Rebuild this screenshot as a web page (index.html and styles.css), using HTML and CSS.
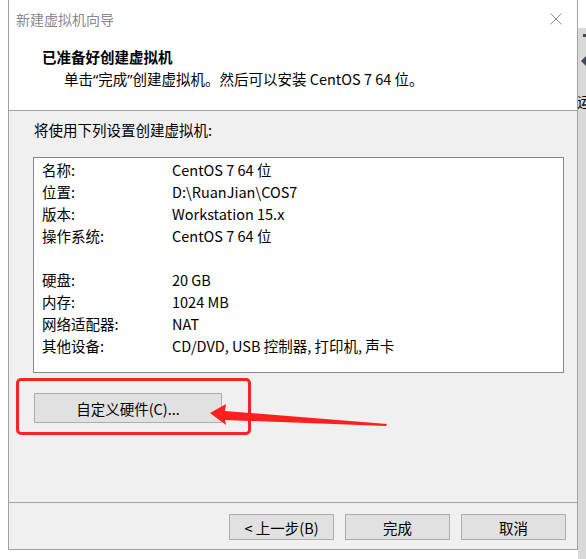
FILE: index.html
```html
<!DOCTYPE html>
<html lang="zh-CN">
<head>
    <meta charset="UTF-8">
    <title>新建虚拟机向导</title>
    <link rel="stylesheet" href="styles.css">
</head>
<body>
<div class="screen">
    <div class="wizard">
        <div class="head">
            <div class="titlebar">
                <span class="title">新建虚拟机向导</span>
                <svg class="close" width="12" height="12" viewBox="0 0 12 12">
                    <path d="M0.5 0.5 L11.5 11.5 M11.5 0.5 L0.5 11.5" stroke="#8c8c8c" stroke-width="1" fill="none"/>
                </svg>
            </div>
            <div class="intro">
                <h1>已准备好创建虚拟机</h1>
                <p>单击<span class="q">“</span>完成<span class="q">”</span>创建虚拟机。然后可以安装 CentOS 7 64 位。</p>
            </div>
        </div>

        <div class="content">
            <p class="lead">将使用下列设置创建虚拟机:</p>

            <div class="summary">
                <div class="row"><span>名称:</span><span>CentOS 7 64 位</span></div>
                <div class="row"><span>位置:</span><span>D:\RuanJian\COS7</span></div>
                <div class="row"><span>版本:</span><span>Workstation 15.x</span></div>
                <div class="row"><span>操作系统:</span><span>CentOS 7 64 位</span></div>
                <div class="row"></div>
                <div class="row"><span>硬盘:</span><span>20 GB</span></div>
                <div class="row"><span>内存:</span><span>1024 MB</span></div>
                <div class="row"><span>网络适配器:</span><span>NAT</span></div>
                <div class="row"><span>其他设备:</span><span>CD/DVD, USB 控制器, 打印机, 声卡</span></div>
            </div>

            <div class="custom">
                <button class="btn hw">自定义硬件(C)...</button>
                <span class="mark"></span>
                <svg class="arrow" width="180" height="26" viewBox="0 0 180 26">
                    <!-- tapered arrow pointing back at the button -->
                    <path d="M0 9 L16 0 L15 7 L177 20 L176 22 L15 16 L16 21 Z" fill="#ff1f1f"/>
                </svg>
            </div>
        </div>

        <div class="foot">
            <button class="btn">&lt; 上一步(B)</button>
            <button class="btn">完成</button>
            <button class="btn">取消</button>
        </div>
    </div>

    <div class="side">
        <div class="side-top"></div>
        <div class="side-panel">
            <span class="dot"></span>
            <span class="tri"></span>
            <span class="cut">运</span>
        </div>
    </div>
</div>
</body>
</html>
```
FILE: styles.css
```css
body {
    margin: 0;
    padding: 0;
    background: #fff;
    font-family: "Noto Sans CJK SC", "Noto Sans", sans-serif;
    font-size: 14.5px;
    color: #000;
}

.screen {
    display: flex;
    height: 559px;
}

.wizard {
    margin-left: 8px;
    width: 568px;
    height: 549px;
    border: 1px solid #a0a0a0;
    border-top: none;
    background: #f0f0f0;
    display: flex;
    flex-direction: column;
}

/* header */
.head {
    background: #fff;
    height: 110px;
    border-bottom: 1px solid #a0a0a0;
}

.titlebar {
    height: 38px;
    display: flex;
    align-items: center;
    justify-content: space-between;
    padding: 0 15px 0 7px;
}

.title {
    color: #8a8a8a;
    font-size: 14px;
}

.close {
    display: block;
}

.intro {
    padding-top: 8px;
}

.intro h1 {
    margin: 0;
    padding-left: 33px;
    font-size: 14.5px;
    font-weight: bold;
    line-height: 22px;
}

.intro p {
    margin: 0;
    padding-left: 55px;
    line-height: 22px;
}

/* narrow quote marks like the system font */
.q {
    font-family: "Noto Sans", sans-serif;
}

/* body */
.content {
    flex: 1;
    padding: 8px 13px 0 24px;
}

.lead {
    margin: 0 0 16px 1px;
    line-height: 22px;
}

.summary {
    background: #fff;
    border: 1px solid #828790;
    padding: 1px 0 15px 8px;
}

.row {
    display: grid;
    grid-template-columns: 130px 1fr;
    height: 22px;
    line-height: 22px;
}

.custom {
    position: relative;
    margin-top: 20px;
    padding-left: 1px;
}

.btn {
    font-family: inherit;
    font-size: 14.5px;
    color: #000;
    background: #e1e1e1;
    border: 1px solid #adadad;
    padding: 0;
    width: 105px;
    height: 26px;
}

.hw {
    width: 188px;
    height: 30px;
    display: block;
}

.mark {
    position: absolute;
    left: -17px;
    top: -15px;
    width: 229px;
    height: 51px;
    border: 3px solid #ff2222;
    border-radius: 5px;
}

.arrow {
    position: absolute;
    left: 177px;
    top: 11px;
}

/* footer */
.foot {
    height: 47px;
    border-top: 1px solid #a0a0a0;
    display: flex;
    justify-content: flex-end;
    gap: 11px;
    padding: 11px 11px 0 0;
    box-sizing: border-box;
}

/* strip of the window behind */
.side {
    flex: 1;
    display: flex;
    flex-direction: column;
    overflow: hidden;
}

.side-top {
    height: 28px;
    background: #fff;
}

.side-panel {
    flex: 1;
    background: #d9d9d9;
    position: relative;
}

.dot {
    position: absolute;
    left: 5px;
    top: 6px;
    width: 3px;
    height: 3px;
    background: #3c4a5c;
}

.tri {
    position: absolute;
    left: 3px;
    top: 28px;
    border-style: solid;
    border-width: 5px 5px 5px 0;
    border-color: transparent #3c4a5c transparent transparent;
}

.cut {
    position: absolute;
    left: -1px;
    top: 63px;
    font-size: 14px;
    color: #000;
}
```
